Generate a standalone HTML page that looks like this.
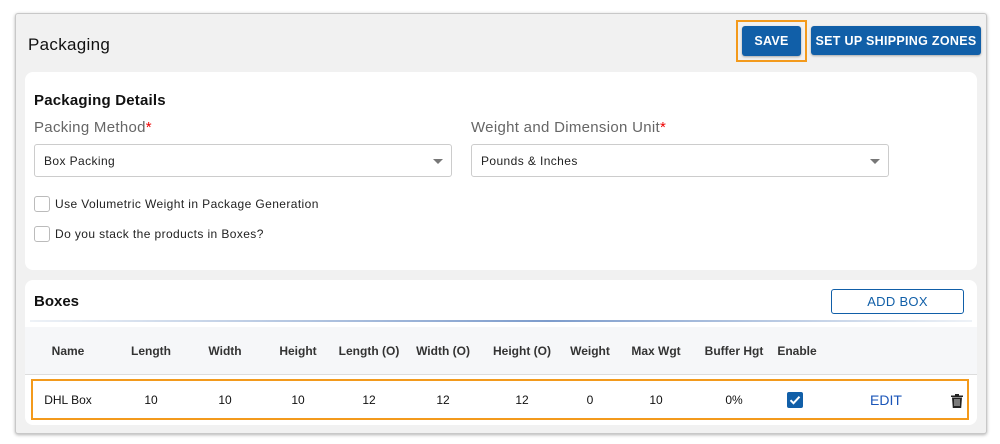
<!DOCTYPE html>
<html><head><style>
*{box-sizing:border-box;margin:0;padding:0}
body{width:1000px;height:444px;background:#fff;font-family:"Liberation Sans",sans-serif;position:relative;overflow:hidden;color:#111}
.abs{position:absolute}
.outer{left:15px;top:13px;width:972px;height:421px;background:#f1f1f1;border:1px solid #c8c8c8;border-radius:3px;box-shadow:0 1px 3px rgba(0,0,0,.3)}
.card{background:#fff;border-radius:8px}
.btn{background:#115fa8;color:#fff;font-weight:bold;font-size:12.5px;border-radius:3px;display:flex;align-items:center;justify-content:center;box-shadow:0 1px 2px rgba(0,0,0,.3);letter-spacing:.3px}
.lbl{font-size:15px;color:#666;letter-spacing:.3px}
.sel{border:1px solid #ccc;border-radius:3px;height:33px;font-size:12px;color:#222;padding:9px 9px;background:#fff;letter-spacing:.4px}
.arrow{position:absolute;right:8px;top:14px;width:0;height:0;border-left:5px solid transparent;border-right:5px solid transparent;border-top:5px solid #777}
.cb{width:16px;height:16px;border:1px solid #bbb;border-radius:3px;background:#fff}
.t{font-size:12px;text-align:center;transform:translateX(-50%);white-space:nowrap}
.h{font-weight:bold;color:#333}
</style></head><body>
<div class="abs outer"></div>
<div class="abs" style="left:28px;top:35px;font-size:17px;letter-spacing:.3px">Packaging</div>
<div class="abs" style="left:736px;top:20px;width:71px;height:42px;border:2px solid #f39a1c"></div>
<div class="abs btn" style="left:742px;top:26px;width:59px;height:30px">SAVE</div>
<div class="abs btn" style="left:811px;top:26px;width:170px;height:29px">SET UP SHIPPING ZONES</div>

<div class="abs card" style="left:25px;top:72px;width:952px;height:198px"></div>
<div class="abs" style="left:34px;top:92px;font-size:15px;font-weight:bold;letter-spacing:.2px">Packaging Details</div>
<div class="abs lbl" style="left:34px;top:119px">Packing Method<span style="color:#e00">*</span></div>
<div class="abs lbl" style="left:471px;top:119px">Weight and Dimension Unit<span style="color:#e00">*</span></div>
<div class="abs sel" style="left:34px;top:144px;width:418px">Box Packing<div class="arrow"></div></div>
<div class="abs sel" style="left:471px;top:144px;width:418px">Pounds &amp; Inches<div class="arrow"></div></div>
<div class="abs cb" style="left:34px;top:196px"></div>
<div class="abs" style="left:55px;top:197px;font-size:12px;color:#222;letter-spacing:.4px">Use Volumetric Weight in Package Generation</div>
<div class="abs cb" style="left:34px;top:226px"></div>
<div class="abs" style="left:55px;top:227px;font-size:12px;color:#222;letter-spacing:.4px">Do you stack the products in Boxes?</div>

<div class="abs card" style="left:25px;top:280px;width:952px;height:145px"></div>
<div class="abs" style="left:34px;top:293px;font-size:15px;font-weight:bold">Boxes</div>
<div class="abs" style="left:831px;top:289px;width:133px;height:25px;border:1px solid #115fa8;border-radius:3px;color:#115fa8;font-size:13px;display:flex;align-items:center;justify-content:center;letter-spacing:.3px">ADD BOX</div>
<div class="abs" style="left:30px;top:320px;width:942px;height:2px;background:linear-gradient(90deg,#eef2f7,#7d9ccc 55%,#eef2f7)"></div>
<div class="abs" style="left:25px;top:327px;width:952px;height:48px;background:#f6f7f9;border-bottom:1px solid #ddd"></div>
<div class="abs" style="left:31px;top:379px;width:938px;height:41px;border:2px solid #f39a1c"></div>

<div class="abs t h" style="left:68px;top:344px">Name</div>
<div class="abs t h" style="left:151px;top:344px">Length</div>
<div class="abs t h" style="left:225px;top:344px">Width</div>
<div class="abs t h" style="left:298px;top:344px">Height</div>
<div class="abs t h" style="left:369px;top:344px">Length (O)</div>
<div class="abs t h" style="left:443px;top:344px">Width (O)</div>
<div class="abs t h" style="left:522px;top:344px">Height (O)</div>
<div class="abs t h" style="left:590px;top:344px">Weight</div>
<div class="abs t h" style="left:656px;top:344px">Max Wgt</div>
<div class="abs t h" style="left:734px;top:344px">Buffer Hgt</div>
<div class="abs t h" style="left:797px;top:344px">Enable</div>

<div class="abs t" style="left:68px;top:393px">DHL Box</div>
<div class="abs t" style="left:151px;top:393px">10</div>
<div class="abs t" style="left:225px;top:393px">10</div>
<div class="abs t" style="left:298px;top:393px">10</div>
<div class="abs t" style="left:369px;top:393px">12</div>
<div class="abs t" style="left:443px;top:393px">12</div>
<div class="abs t" style="left:522px;top:393px">12</div>
<div class="abs t" style="left:590px;top:393px">0</div>
<div class="abs t" style="left:656px;top:393px">10</div>
<div class="abs t" style="left:734px;top:393px">0%</div>
<div class="abs" style="left:787px;top:392px;width:16px;height:16px;background:#115fa8;border-radius:2px">
<svg width="16" height="16" viewBox="0 0 16 16"><path d="M3.5 8.2l3 3 6-6.5" stroke="#fff" stroke-width="2" fill="none"/></svg></div>
<div class="abs t" style="left:886px;top:392px;color:#1a55b8;font-size:14px">EDIT</div>
<svg class="abs" style="left:951px;top:394px" width="12" height="14" viewBox="0 0 12 14"><path d="M0 1.5h12v1.5H0zM4 0h4v1.5H4zM1 3.5h10l-.8 10.5H1.8z" fill="#222"/><path d="M4 5v7M6 5v7M8 5v7" stroke="#fff" stroke-width=".8"/></svg>
</body></html>
